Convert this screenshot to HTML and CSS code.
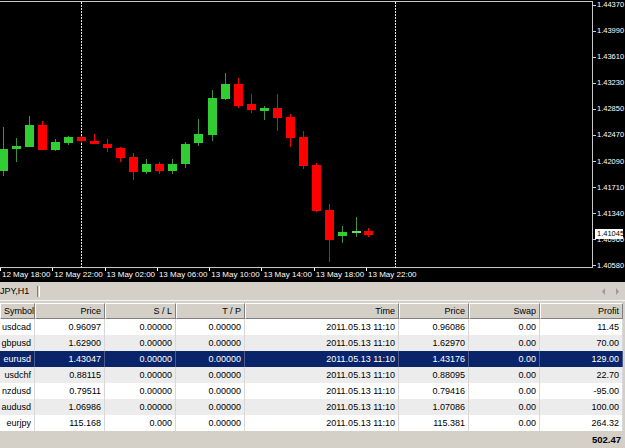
FILE: index.html
```html
<!DOCTYPE html>
<html lang="en">
<head>
    <meta charset="UTF-8">
    <title>USDJPY,H1 - Terminal</title>
    <link rel="stylesheet" href="styles.css">
</head>
<body>

    <div class="terminal">
        <!-- Chart window -->
        <div class="chart">
            <svg class="plot" width="593" height="268" viewBox="0 0 593 268">
                <line class="frame" x1="0" y1="1.5" x2="593" y2="1.5"/>
                <line class="frame" x1="0" y1="267.5" x2="593" y2="267.5"/>
                <line class="frame" x1="592.5" y1="1" x2="592.5" y2="268"/>
                <line class="day-sep" x1="81.5" y1="2" x2="81.5" y2="268"/>
                <line class="day-sep" x1="395.5" y1="2" x2="395.5" y2="268"/>

                <!-- bullish candles: wick then body -->
                <g class="bull">
                    <rect class="wick" x="3" y="127" width="1" height="49"/><rect x="-1" y="149" width="9" height="22"/>
                    <rect class="wick" x="16" y="138" width="1" height="24"/><rect x="12" y="146" width="9" height="3"/>
                    <rect class="wick" x="29" y="116" width="1" height="31"/><rect x="25" y="125" width="9" height="22"/>
                    <rect class="wick" x="55" y="139" width="1" height="12"/><rect x="51" y="142" width="9" height="8"/>
                    <rect class="wick" x="68" y="136" width="1" height="9"/><rect x="64" y="137" width="9" height="6"/>
                    <rect class="wick" x="146" y="159" width="1" height="15"/><rect x="142" y="164" width="9" height="8"/>
                    <rect class="wick" x="172" y="159" width="1" height="15"/><rect x="168" y="164" width="9" height="7"/>
                    <rect class="wick" x="185" y="142" width="1" height="26"/><rect x="181" y="144" width="9" height="20"/>
                    <rect class="wick" x="198" y="119" width="1" height="27"/><rect x="194" y="134" width="9" height="9"/>
                    <rect class="wick" x="212" y="90" width="1" height="51"/><rect x="208" y="98" width="9" height="37"/>
                    <rect class="wick" x="225" y="73" width="1" height="27"/><rect x="221" y="84" width="9" height="15"/>
                    <rect class="wick" x="264" y="106" width="1" height="14"/><rect x="260" y="108" width="9" height="3"/>
                    <rect class="wick" x="342" y="226" width="1" height="17"/><rect x="338" y="232" width="9" height="4"/>
                    <rect class="wick" x="356" y="217" width="1" height="20"/><rect class="doji" x="352" y="231" width="9" height="2"/>
                </g>

                <!-- bearish candles -->
                <g class="bear">
                    <rect x="42" y="121" width="1" height="29"/><rect x="38" y="125" width="9" height="25"/>
                    <rect x="81" y="136" width="1" height="7"/><rect x="77" y="137" width="9" height="4"/>
                    <rect x="94" y="134" width="1" height="10"/><rect x="90" y="141" width="9" height="3"/>
                    <rect x="107" y="139" width="1" height="13"/><rect x="103" y="144" width="9" height="4"/>
                    <rect x="120" y="147" width="1" height="15"/><rect x="116" y="148" width="9" height="10"/>
                    <rect x="133" y="153" width="1" height="27"/><rect x="129" y="157" width="9" height="15"/>
                    <rect x="159" y="162" width="1" height="12"/><rect x="155" y="164" width="9" height="7"/>
                    <rect x="238" y="78" width="1" height="30"/><rect x="234" y="84" width="9" height="22"/>
                    <rect x="251" y="94" width="1" height="19"/><rect x="247" y="104" width="9" height="6"/>
                    <rect x="277" y="94" width="1" height="37"/><rect x="273" y="108" width="9" height="10"/>
                    <rect x="290" y="114" width="1" height="33"/><rect x="286" y="117" width="9" height="21"/>
                    <rect x="303" y="131" width="1" height="38"/><rect x="299" y="137" width="9" height="29"/>
                    <rect x="316" y="163" width="1" height="49"/><rect x="312" y="165" width="9" height="46"/>
                    <rect x="329" y="204" width="1" height="58"/><rect x="325" y="210" width="9" height="30"/>
                    <rect x="368" y="228" width="1" height="9"/><rect x="364" y="231" width="9" height="4"/>
                </g>
            </svg>

            <div class="price-axis">
                <span>1.44370</span>
                <span>1.43990</span>
                <span>1.43610</span>
                <span>1.43230</span>
                <span>1.42850</span>
                <span>1.42470</span>
                <span>1.42090</span>
                <span>1.41710</span>
                <span>1.41340</span>
                <span>1.40960</span>
                <span>1.40580</span>
                <div class="last-price">1.41045</div>
            </div>

            <div class="time-axis">
                <span>12 May 18:00</span>
                <span>12 May 22:00</span>
                <span>13 May 02:00</span>
                <span>13 May 06:00</span>
                <span>13 May 10:00</span>
                <span>13 May 14:00</span>
                <span>13 May 18:00</span>
                <span>13 May 22:00</span>
            </div>
        </div>

        <!-- Chart tabs -->
        <div class="tabs">
            <span class="tab">JPY,H1</span>
            <span class="tab-sep"></span>
            <span class="scroll">
                <svg width="4" height="7" viewBox="0 0 4 7"><path d="M3 0 L0 3.5 L3 7 Z"/></svg>
                <svg width="4" height="7" viewBox="0 0 4 7"><path d="M1 0 L4 3.5 L1 7 Z"/></svg>
            </span>
        </div>
        <div class="panel-edge"></div>

        <!-- Trade list -->
        <div class="trades">
            <div class="row head">
                <span class="left">Symbol</span>
                <span>Price</span>
                <span>S / L</span>
                <span>T / P</span>
                <span>Time</span>
                <span>Price</span>
                <span>Swap</span>
                <span>Profit</span>
            </div>
            <div class="row">
                <span>usdcad</span><span>0.96097</span><span>0.00000</span><span>0.00000</span>
                <span>2011.05.13 11:10</span><span>0.96086</span><span>0.00</span><span>11.45</span>
            </div>
            <div class="row alt">
                <span>gbpusd</span><span>1.62900</span><span>0.00000</span><span>0.00000</span>
                <span>2011.05.13 11:10</span><span>1.62970</span><span>0.00</span><span>70.00</span>
            </div>
            <div class="row selected">
                <span>eurusd</span><span>1.43047</span><span>0.00000</span><span>0.00000</span>
                <span>2011.05.13 11:10</span><span>1.43176</span><span>0.00</span><span>129.00</span>
            </div>
            <div class="row alt">
                <span>usdchf</span><span>0.88115</span><span>0.00000</span><span>0.00000</span>
                <span>2011.05.13 11:10</span><span>0.88095</span><span>0.00</span><span>22.70</span>
            </div>
            <div class="row">
                <span>nzdusd</span><span>0.79511</span><span>0.00000</span><span>0.00000</span>
                <span>2011.05.13 11:10</span><span>0.79416</span><span>0.00</span><span>-95.00</span>
            </div>
            <div class="row alt">
                <span>audusd</span><span>1.06986</span><span>0.00000</span><span>0.00000</span>
                <span>2011.05.13 11:10</span><span>1.07086</span><span>0.00</span><span>100.00</span>
            </div>
            <div class="row">
                <span>eurjpy</span><span>115.168</span><span>0.000</span><span>0.00000</span>
                <span>2011.05.13 11:10</span><span>115.381</span><span>0.00</span><span>264.32</span>
            </div>
            <div class="total">
                <span>502.47</span>
            </div>
        </div>
    </div>

</body>
</html>
```

FILE: styles.css
```css
body {
    margin: 0;
    background: #d4d0c8;
    font-family: "Liberation Sans", Arial, sans-serif;
    overflow: hidden;
}
.terminal {
    width: 625px;
    height: 448px;
}

/* chart */
.chart {
    display: grid;
    grid-template-columns: 593px 32px;
    grid-template-rows: 268px 14px;
    background: #000;
    color: #fff;
}
.plot {
    display: block;
}
.frame {
    stroke: #c8c8c8;
    stroke-width: 1;
}
.day-sep {
    stroke: #e6e6e6;
    stroke-width: 1;
    stroke-dasharray: 2 1;
}
.bull rect {
    fill: #32cd32;
}
.bull .wick {
    fill: #3f8f3f;
}
.bull .doji {
    fill: #66dd66;
}
.bear rect {
    fill: #ff0000;
}
.price-axis {
    position: relative;
    display: flex;
    flex-direction: column;
    gap: 16.1px;
    font-size: 7.5px;
}
.price-axis span {
    height: 10px;
    line-height: 10px;
    padding-left: 4px;
    background: linear-gradient(#d0d0d0, #d0d0d0) no-repeat 0 50% / 3px 1px;
}
.last-price {
    position: absolute;
    top: 229px;
    left: 2px;
    width: 28px;
    height: 10px;
    line-height: 10px;
    padding-left: 2px;
    box-sizing: border-box;
    background: #fff;
    color: #000;
    font-size: 7.5px;
}
.time-axis {
    grid-column: 1 / -1;
    display: flex;
    font-size: 8px;
    line-height: 14px;
}
.time-axis span {
    flex: 0 0 52.3px;
    padding-left: 2px;
    box-sizing: border-box;
    white-space: nowrap;
    background: linear-gradient(#fff, #fff) no-repeat 0 0 / 1px 3px;
}

/* tab strip */
.tabs {
    display: flex;
    align-items: center;
    height: 18px;
    background: #d4d0c8;
    font-size: 9px;
    border-bottom: 1px solid #f4f3f0;
}
.tab {
    width: 37px;
}
.tab-sep {
    width: 1px;
    height: 11px;
    border-left: 1px solid #808080;
    border-right: 1px solid #fff;
}
.scroll {
    margin-left: auto;
    margin-right: 6px;
    display: flex;
    gap: 9px;
}
.scroll svg {
    fill: #9c9a94;
}
.panel-edge {
    height: 2px;
    background: #d4d0c8;
}

/* trade list */
.trades {
    width: 623px;
    font-size: 9px;
}
.row {
    display: grid;
    grid-template-columns: 35px 70px 71px 69px 154px 70px 71px 83px;
    height: 16px;
    line-height: 16px;
    background: #fff;
    color: #000;
}
.row span {
    text-align: right;
    padding-right: 3px;
    border-right: 1px solid #d8d8d8;
    white-space: nowrap;
    overflow: hidden;
}
.row.alt {
    background: #ececec;
}
.row.selected {
    background: #0a246a;
    color: #fff;
}
.row.selected span {
    border-right-color: #4a5a8c;
}
.row.head {
    background: #d4d0c8;
    line-height: 14px;
}
.row.head span {
    border-top: 1px solid #fff;
    border-left: 1px solid #fff;
    border-right: 1px solid #808080;
    border-bottom: 1px solid #808080;
}
.row.head .left {
    text-align: left;
    padding-left: 3px;
}
.total {
    display: flex;
    justify-content: flex-end;
    height: 17px;
    line-height: 17px;
    background: #d4d0c8;
    font-weight: bold;
    font-size: 9.5px;
    padding-right: 2px;
}
```
